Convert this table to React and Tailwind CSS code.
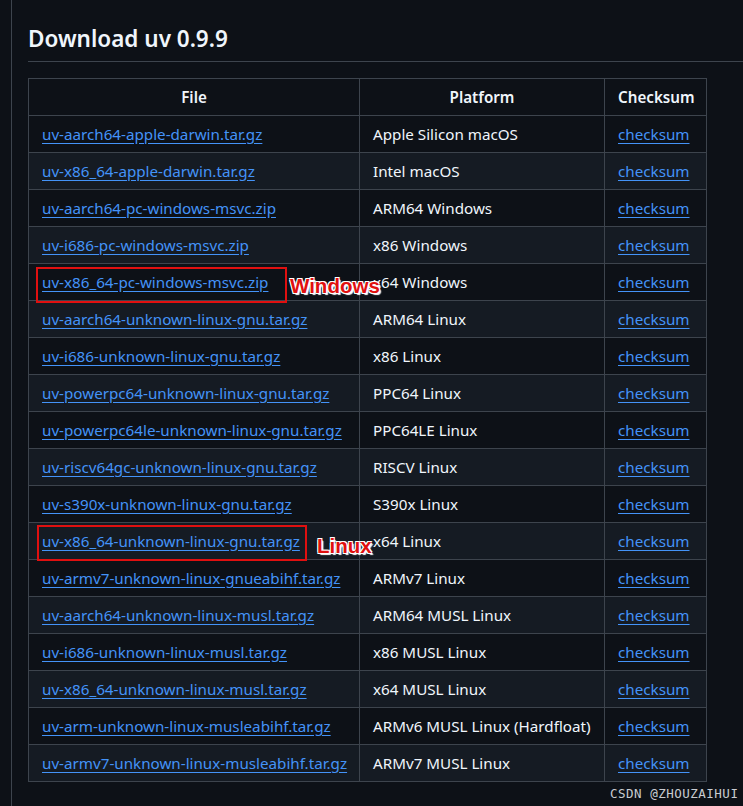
import React from "react";

const rows = [
  ["uv-aarch64-apple-darwin.tar.gz", "Apple Silicon macOS"],
  ["uv-x86_64-apple-darwin.tar.gz", "Intel macOS"],
  ["uv-aarch64-pc-windows-msvc.zip", "ARM64 Windows"],
  ["uv-i686-pc-windows-msvc.zip", "x86 Windows"],
  ["uv-x86_64-pc-windows-msvc.zip", "x64 Windows"],
  ["uv-aarch64-unknown-linux-gnu.tar.gz", "ARM64 Linux"],
  ["uv-i686-unknown-linux-gnu.tar.gz", "x86 Linux"],
  ["uv-powerpc64-unknown-linux-gnu.tar.gz", "PPC64 Linux"],
  ["uv-powerpc64le-unknown-linux-gnu.tar.gz", "PPC64LE Linux"],
  ["uv-riscv64gc-unknown-linux-gnu.tar.gz", "RISCV Linux"],
  ["uv-s390x-unknown-linux-gnu.tar.gz", "S390x Linux"],
  ["uv-x86_64-unknown-linux-gnu.tar.gz", "x64 Linux"],
  ["uv-armv7-unknown-linux-gnueabihf.tar.gz", "ARMv7 Linux"],
  ["uv-aarch64-unknown-linux-musl.tar.gz", "ARM64 MUSL Linux"],
  ["uv-i686-unknown-linux-musl.tar.gz", "x86 MUSL Linux"],
  ["uv-x86_64-unknown-linux-musl.tar.gz", "x64 MUSL Linux"],
  ["uv-arm-unknown-linux-musleabihf.tar.gz", "ARMv6 MUSL Linux (Hardfloat)"],
  ["uv-armv7-unknown-linux-musleabihf.tar.gz", "ARMv7 MUSL Linux"],
];

const font = "font-['Segoe_UI','Noto_Sans',sans-serif]";
const tag =
  "absolute font-['Liberation_Sans',sans-serif] font-bold text-[20.5px] leading-none text-[#e01010] [text-shadow:1px_1px_0_#fff,-1px_-1px_0_#fff,1px_-1px_0_#fff,-1px_1px_0_#fff,2px_2px_1px_#fff]";

export default function App() {
  return (
    <div className={`relative min-h-[806px] w-[743px] bg-[#0d1117] text-[#f0f6fc] ${font}`}>
      <div className="ml-[11px] min-h-[806px] border-l border-[#3d444d] pl-[16px] pt-[25px]">
        <h2 className="border-b border-[#3d444d] pb-[8px] text-[22.5px] font-semibold leading-[28px]">
          Download uv 0.9.9
        </h2>

        <table className="mt-[16px] w-[679px] table-fixed border-collapse text-[15.2px]">
          <colgroup>
            <col className="w-[331px]" />
            <col className="w-[245px]" />
            <col className="w-[102px]" />
          </colgroup>
          <thead>
            <tr className="h-[37px]">
              <th className="border border-[#3d444d] px-[13px] font-semibold">File</th>
              <th className="border border-[#3d444d] px-[13px] font-semibold">Platform</th>
              <th className="border border-[#3d444d] px-[13px] font-semibold">Checksum</th>
            </tr>
          </thead>
          <tbody>
            {rows.map(([file, platform], i) => (
              <tr key={file} className={`h-[37px] ${i % 2 ? "bg-[#151b23]" : ""}`}>
                <td className="whitespace-nowrap border border-[#3d444d] px-[13px]">
                  <a className="text-[#4493f8] underline underline-offset-[3px]">{file}</a>
                </td>
                <td className="whitespace-nowrap border border-[#3d444d] px-[13px]">{platform}</td>
                <td className="border border-[#3d444d] px-[13px]">
                  <a className="text-[#4493f8] underline underline-offset-[3px]">checksum</a>
                </td>
              </tr>
            ))}
          </tbody>
        </table>
      </div>

      {/* annotation boxes */}
      <div className="absolute left-[36px] top-[267px] h-[36px] w-[251px] border-2 border-[#e01010]" />
      <span className={`${tag} left-[290px] top-[276px]`}>Windows</span>
      <div className="absolute left-[37px] top-[525px] h-[36px] w-[270px] border-2 border-[#e01010]" />
      <span className={`${tag} left-[317px] top-[536px]`}>Linux</span>

      <span className="absolute left-[610px] top-[785px] font-['DejaVu_Sans_Mono',monospace] text-[12.5px] tracking-[0.5px] text-[#c9ccd1]">
        CSDN @ZHOUZAIHUI
      </span>
    </div>
  );
}
